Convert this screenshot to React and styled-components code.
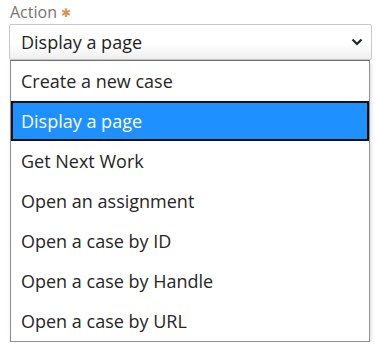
import React from 'react';
import styled, { createGlobalStyle } from 'styled-components';

const GlobalStyle = createGlobalStyle`
  html, body {
    margin: 0;
    padding: 0;
    background: #ffffff;
  }
  body {
    font-family: 'Open Sans', 'Noto Sans', sans-serif;
  }
`;

const options = [
  'Create a new case',
  'Display a page',
  'Get Next Work',
  'Open an assignment',
  'Open a case by ID',
  'Open a case by Handle',
  'Open a case by URL'
];

const Field = styled.div`
  width: 376px;
  padding: 0 4px 0 9px;
  box-sizing: border-box;
`;

const Label = styled.label`
  display: flex;
  align-items: center;
  gap: 4px;
  height: 24px;
  padding-left: 1px;
  font-size: 16px;
  color: #757575;
  line-height: 22px;
`;

const Star = styled.span`
  color: #d8934a;
  font-family: 'DejaVu Sans', sans-serif;
  font-size: 12px;
  line-height: 1;
  margin-top: 2px;
`;

const SelectBox = styled.div`
  display: flex;
  align-items: center;
  justify-content: space-between;
  height: 36px;
  box-sizing: border-box;
  padding: 0 8px 0 11px;
  border: 1px solid #c8c8c8;
  border-radius: 2px;
  background: linear-gradient(#ffffff 55%, #efefef);
  font-size: 18px;
  color: #1f1f1f;
`;

const List = styled.ul`
  list-style: none;
  margin: 0 2px 0 1px;
  padding: 0;
  border: 1px solid #8f8f8f;
  border-top-color: #6f6f6f;
  background: #fff;
  box-shadow: 1px 2px 4px rgba(0, 0, 0, 0.15);
`;

const Item = styled.li`
  height: 40px;
  box-sizing: border-box;
  display: flex;
  align-items: center;
  padding-left: ${p => (p.$active ? '8px' : '10px')};
  font-size: 18px;
  color: ${p => (p.$active ? '#ffffff' : '#262626')};
  background: ${p => (p.$active ? '#1e90ff' : 'transparent')};
  border: ${p => (p.$active ? '2px solid #111' : 'none')};
`;

const Chevron = () => (
  <svg width="12" height="8" viewBox="0 0 12 8">
    <path d="M1.5 1.5 L6 6 L10.5 1.5" fill="none" stroke="#1c2230" strokeWidth="2.2" />
  </svg>
);

export default function App() {
  return (
    <>
      <GlobalStyle />
      <Field>
        <Label>
          Action <Star>✱</Star>
        </Label>
        <SelectBox>
          <span>Display a page</span>
          <Chevron />
        </SelectBox>
        <List>
          {options.map(o => (
            <Item key={o} $active={o === 'Display a page'}>{o}</Item>
          ))}
        </List>
      </Field>
    </>
  );
}
